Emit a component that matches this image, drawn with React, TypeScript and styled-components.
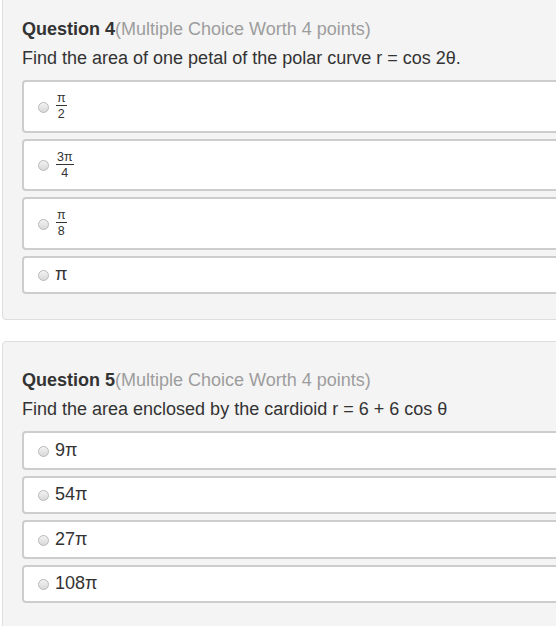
import React, { FunctionComponent, Fragment } from 'react'
import styled, { createGlobalStyle } from 'styled-components'

const GlobalStyle = createGlobalStyle`
    html, body {
        margin: 0;
        padding: 0;
        background: #ffffff;
        overflow: hidden;
    }
    body {
        font-family: 'Liberation Sans', Arial, Helvetica, sans-serif;
        color: #333333;
    }
`

// the page is cut off on the right, like the screenshot
const Page = styled.div`
    display: flex;
    flex-direction: column;
    gap: 21px;
    margin-top: -10px;
    padding-left: 2px;
    width: 100%;
    box-sizing: border-box;
    overflow: hidden;
`

const Panel = styled.section`
    flex: none;
    width: 600px;
    background: #f4f4f4;
    border: 1px solid #dddddd;
    border-radius: 4px;
    padding: 26px 19px 25px 19px;
`

const Heading = styled.h2`
    margin: 0;
    font-size: 18px;
    line-height: 24px;
    font-weight: 700;
    color: #333333;
`

const Worth = styled.span`
    font-weight: 400;
    color: #9d9d9d;
`

const Prompt = styled.p`
    margin: 5px 0 10px 0;
    font-size: 18px;
    line-height: 24px;
    color: #333333;
`

const Options = styled.div`
    display: flex;
    flex-direction: column;
    gap: 6px;
`

const Option = styled.label<{ tall?: boolean }>`
    display: flex;
    align-items: center;
    gap: 6px;
    height: ${props => props.tall ? '52.5px' : '38.5px'};
    box-sizing: border-box;
    padding-left: 14px;
    background: #ffffff;
    border: 2px solid #cdcdcd;
    border-radius: 4px;
    font-size: 18px;
    color: #333333;
`

const Radio = styled.input`
    appearance: none;
    -webkit-appearance: none;
    margin: 2px 0 0 0;
    width: 11px;
    height: 11px;
    border-radius: 50%;
    border: 1px solid #b9b9b9;
    background: linear-gradient(#f2f2f2, #d9d9d9);
    box-sizing: border-box;
    flex: none;
`

const Fraction = styled.span`
    display: inline-flex;
    flex-direction: column;
    align-items: stretch;
    margin-left: 1px;
    font-size: 12.5px;
    line-height: 12px;
    text-align: center;
    color: #333333;
`

const Numerator = styled.span`
    padding: 0 1px 1px 1px;
`

const Denominator = styled.span`
    padding: 2px 1px 0 1px;
    border-top: 1px solid #333333;
`

type Answer = { text?: string, num?: string, den?: string }

type Question = { number: number, points: number, prompt: string, answers: Answer[] }

const questions: Question[] = [
    {
        number: 4,
        points: 4,
        prompt: 'Find the area of one petal of the polar curve r = cos 2θ.',
        answers: [
            { num: 'π', den: '2' },
            { num: '3π', den: '4' },
            { num: 'π', den: '8' },
            { text: 'π' },
        ],
    },
    {
        number: 5,
        points: 4,
        prompt: 'Find the area enclosed by the cardioid r = 6 + 6 cos θ',
        answers: [
            { text: '9π' },
            { text: '54π' },
            { text: '27π' },
            { text: '108π' },
        ],
    },
]

const QuestionPanel: FunctionComponent<{ question: Question }> = ({ question }) => {
    return (
        <Panel>
            <Heading>
                Question {question.number}
                <Worth>(Multiple Choice Worth {question.points} points)</Worth>
            </Heading>
            <Prompt>{question.prompt}</Prompt>
            <Options>
                {question.answers.map((answer, i) => (
                    <Option key={i} tall={!!answer.num}>
                        <Radio type="radio" name={`q${question.number}`} />
                        {answer.num ? (
                            <Fraction>
                                <Numerator>{answer.num}</Numerator>
                                <Denominator>{answer.den}</Denominator>
                            </Fraction>
                        ) : (
                            <span>{answer.text}</span>
                        )}
                    </Option>
                ))}
            </Options>
        </Panel>
    )
}

const App: FunctionComponent = () => {
    return (
        <Fragment>
            <GlobalStyle />
            <Page>
                {questions.map(q => <QuestionPanel key={q.number} question={q} />)}
            </Page>
        </Fragment>
    )
}

export default App
